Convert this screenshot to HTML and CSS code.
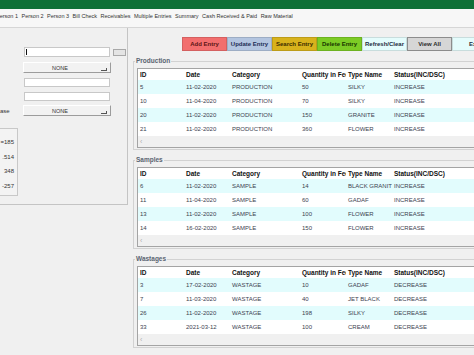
FILE: index.html
```html
<!DOCTYPE html>
<html lang="en">
<head>
    <meta charset="UTF-8">
    <meta name="viewport" content="width=device-width, initial-scale=1.0">
    <title>Stock Register</title>
    <link rel="stylesheet" href="styles.css">
</head>
<body>
    <div class="titlebar"></div>
    <nav class="tabs">
        <span class="tab first">Person 1</span>
        <span class="tab">Person 2</span>
        <span class="tab">Person 3</span>
        <span class="tab">Bill Check</span>
        <span class="tab">Receivables</span>
        <span class="tab">Multiple Entries</span>
        <span class="tab">Summary</span>
        <span class="tab">Cash Received &amp; Paid</span>
        <span class="tab">Raw Material</span>
    </nav>

    <div class="page">
        <aside class="side">
            <div class="field-row">
                <div class="text-box"><span class="caret"></span></div>
                <span class="browse"></span>
            </div>
            <div class="combo">NONE<span class="drop"></span></div>
            <div class="text-box"></div>
            <div class="text-box"></div>
            <div class="combo-row">
                <span class="side-label">ase</span>
                <div class="combo">NONE<span class="drop"></span></div>
            </div>
            <div class="totals">
                <div>=185</div>
                <div>.514</div>
                <div>348</div>
                <div>-257</div>
            </div>
        </aside>

        <main class="content">
            <div class="actions">
                <button class="btn add">Add Entry</button>
                <button class="btn update">Update Entry</button>
                <button class="btn search">Search Entry</button>
                <button class="btn delete">Delete Entry</button>
                <button class="btn refresh">Refresh/Clear</button>
                <button class="btn view">View All</button>
                <button class="btn exit">Exit</button>
            </div>

            <fieldset class="group">
                <legend>Production</legend>
                <div class="grid">
                    <table>
                        <colgroup><col class="c-id"><col class="c-date"><col class="c-cat"><col class="c-qty"><col class="c-type"><col class="c-status"></colgroup>
                        <thead>
                            <tr><th>ID</th><th>Date</th><th>Category</th><th>Quantity in Feet</th><th>Type Name</th><th>Status(INC/DSC)</th></tr>
                        </thead>
                        <tbody>
                            <tr><td>5</td><td>11-02-2020</td><td>PRODUCTION</td><td>50</td><td>SILKY</td><td>INCREASE</td></tr>
                            <tr><td>10</td><td>11-04-2020</td><td>PRODUCTION</td><td>70</td><td>SILKY</td><td>INCREASE</td></tr>
                            <tr><td>20</td><td>11-02-2020</td><td>PRODUCTION</td><td>150</td><td>GRANITE</td><td>INCREASE</td></tr>
                            <tr><td>21</td><td>11-02-2020</td><td>PRODUCTION</td><td>360</td><td>FLOWER</td><td>INCREASE</td></tr>
                        </tbody>
                    </table>
                    <div class="hscroll">&lsaquo;</div>
                </div>
            </fieldset>

            <fieldset class="group">
                <legend>Samples</legend>
                <div class="grid">
                    <table>
                        <colgroup><col class="c-id"><col class="c-date"><col class="c-cat"><col class="c-qty"><col class="c-type"><col class="c-status"></colgroup>
                        <thead>
                            <tr><th>ID</th><th>Date</th><th>Category</th><th>Quantity in Feet</th><th>Type Name</th><th>Status(INC/DSC)</th></tr>
                        </thead>
                        <tbody>
                            <tr><td>6</td><td>11-02-2020</td><td>SAMPLE</td><td>14</td><td>BLACK GRANITE</td><td>INCREASE</td></tr>
                            <tr><td>11</td><td>11-04-2020</td><td>SAMPLE</td><td>60</td><td>GADAF</td><td>INCREASE</td></tr>
                            <tr><td>13</td><td>11-02-2020</td><td>SAMPLE</td><td>100</td><td>FLOWER</td><td>INCREASE</td></tr>
                            <tr><td>14</td><td>16-02-2020</td><td>SAMPLE</td><td>150</td><td>FLOWER</td><td>INCREASE</td></tr>
                        </tbody>
                    </table>
                    <div class="hscroll">&lsaquo;</div>
                </div>
            </fieldset>

            <fieldset class="group">
                <legend>Wastages</legend>
                <div class="grid">
                    <table>
                        <colgroup><col class="c-id"><col class="c-date"><col class="c-cat"><col class="c-qty"><col class="c-type"><col class="c-status"></colgroup>
                        <thead>
                            <tr><th>ID</th><th>Date</th><th>Category</th><th>Quantity in Feet</th><th>Type Name</th><th>Status(INC/DSC)</th></tr>
                        </thead>
                        <tbody>
                            <tr><td>3</td><td>17-02-2020</td><td>WASTAGE</td><td>10</td><td>GADAF</td><td>DECREASE</td></tr>
                            <tr><td>7</td><td>11-03-2020</td><td>WASTAGE</td><td>40</td><td>JET BLACK</td><td>DECREASE</td></tr>
                            <tr><td>26</td><td>11-02-2020</td><td>WASTAGE</td><td>198</td><td>SILKY</td><td>DECREASE</td></tr>
                            <tr><td>33</td><td>2021-03-12</td><td>WASTAGE</td><td>100</td><td>CREAM</td><td>DECREASE</td></tr>
                        </tbody>
                    </table>
                    <div class="hscroll">&lsaquo;</div>
                </div>
            </fieldset>
        </main>
    </div>
</body>
</html>
```

FILE: styles.css
```css
* {
    margin: 0;
    padding: 0;
    box-sizing: border-box;
}

body {
    width: 474px;
    height: 355px;
    overflow: hidden;
    background: #f0f0f0;
    font-family: 'Liberation Sans', Arial, sans-serif;
    color: #222222;
}

.titlebar {
    height: 9px;
    background: #0f7037;
}

/* tab strip */
.tabs {
    display: flex;
    gap: 3.5px;
    height: 19px;
    padding-top: 3px;
    background: #f7f7f7;
    border-bottom: 1px solid #d6d6d6;
    font-size: 5.5px;
    line-height: 9px;
    color: #333333;
    white-space: nowrap;
}

.tab.first {
    margin-left: -4px;
}

.page {
    display: flex;
    align-items: flex-start;
}

/* left input panel */
.side {
    width: 128px;
    flex-shrink: 0;
    height: 177px;
    padding-top: 19px;
    border-right: 1px solid #c4c4c4;
    border-bottom: 1px solid #c4c4c4;
    display: flex;
    flex-direction: column;
    gap: 5px;
}

.text-box {
    width: 86px;
    height: 9px;
    margin-left: 24px;
    background: #ffffff;
    border: 1px solid #c8c8c8;
    position: relative;
}

.field-row {
    display: flex;
    align-items: center;
    gap: 3px;
}

.field-row .text-box {
    height: 10px;
}

.caret {
    position: absolute;
    left: 1px;
    top: 1px;
    width: 1px;
    height: 6px;
    background: #111111;
}

.browse {
    width: 13px;
    height: 7px;
    background: #e4e4e4;
    border: 1px solid #a8a8a8;
}

.combo {
    width: 88px;
    height: 11px;
    margin-left: 23px;
    padding-right: 14px;
    display: flex;
    align-items: center;
    justify-content: center;
    position: relative;
    background: #f2f2f2;
    border: 1px solid #ffffff;
    border-right-color: #9c9c9c;
    border-bottom-color: #9c9c9c;
    font-size: 5.5px;
    color: #333333;
}

.drop {
    position: absolute;
    right: 3px;
    top: 5px;
    width: 6px;
    height: 3px;
    border-right: 1px solid #555555;
    border-bottom: 1px solid #555555;
}

.combo-row {
    display: flex;
    align-items: center;
    margin-top: -1px;
}

.side-label {
    width: 23px;
    font-size: 6px;
    color: #333333;
}

.combo-row .combo {
    margin-left: 0;
}

.totals {
    width: 18px;
    height: 68px;
    margin-top: 7px;
    padding-top: 6px;
    background: #f3f3f3;
    border: 1px solid #c8c8c8;
    border-left: none;
    text-align: right;
    padding-right: 3px;
    font-size: 6px;
    line-height: 14.7px;
    color: #333333;
}

/* right side */
.content {
    flex: 1;
    min-width: 0;
    padding-left: 5px;
    padding-top: 9px;
}

.actions {
    display: flex;
    padding-left: 49px;
    height: 14px;
    margin-bottom: 6px;
    white-space: nowrap;
}

.btn {
    width: 45px;
    flex-shrink: 0;
    height: 14px;
    border: 1px solid rgba(0, 0, 0, 0.12);
    font-family: 'Liberation Sans', Arial, sans-serif;
    font-size: 6px;
    font-weight: bold;
    overflow: hidden;
}

.add { background: #f26e6e; color: #5c1414; }
.update { background: #b3c5e0; color: #1d2d55; }
.search { background: #d8b21c; color: #3b2c00; }
.delete { background: #7ccb25; color: #173600; }
.refresh { background: #e4fcfc; color: #1c2c3c; }
.view { background: #d6d6d6; color: #2c2c2c; border-color: #8c8c8c; }
.exit { background: #e4fcfc; color: #1c2c3c; }

.group {
    width: 370px;
    border: 1px solid #d2d2d2;
    padding: 0 0 1px 3px;
    margin-bottom: 6px;
}

.group legend {
    margin-left: -2px;
    padding: 0 1px;
    font-size: 6.5px;
    line-height: 8px;
    font-weight: bold;
    color: #5a6470;
}

.grid {
    margin-top: 3px;
    background: #ffffff;
    border: 1px solid #a4a4a4;
}

.grid table {
    width: 364px;
    table-layout: fixed;
    border-collapse: collapse;
}

.c-id, .c-date, .c-qty, .c-type { width: 46px; }
.c-cat { width: 70px; }
.c-status { width: 110px; }

.grid th,
.grid td {
    padding-left: 2px;
    text-align: left;
    white-space: nowrap;
    overflow: hidden;
    text-overflow: clip;
}

.grid th {
    height: 11px;
    font-size: 6.5px;
    font-weight: bold;
    color: #111111;
}

.grid td {
    height: 14px;
    font-size: 6px;
    color: #3c4250;
}

.grid tbody tr:nth-child(odd) {
    background: #e2fcfd;
}

.hscroll {
    height: 11px;
    background: #f0f0f0;
    padding-left: 2px;
    font-size: 7px;
    line-height: 11px;
    color: #b0b0b0;
}
```
